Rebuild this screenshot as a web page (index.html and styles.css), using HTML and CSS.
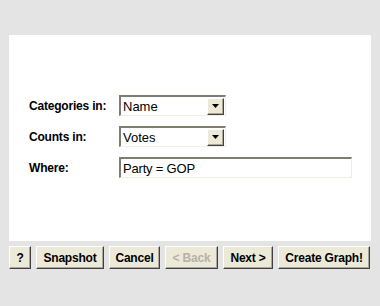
FILE: index.html
```html
<!DOCTYPE html>
<html>
<head>
<meta charset="utf-8">
<link rel="stylesheet" href="styles.css">
</head>
<body>
<div class="page">
  <div class="panel">
    <div class="form">
      <div class="row">
        <div class="label">Categories in:</div>
        <div class="select">
          <span class="value">Name</span>
          <span class="drop"><svg width="7" height="4" viewBox="0 0 7 4"><path d="M0 0H7L3.5 4Z" fill="#000"/></svg></span>
        </div>
      </div>
      <div class="row">
        <div class="label">Counts in:</div>
        <div class="select">
          <span class="value">Votes</span>
          <span class="drop"><svg width="7" height="4" viewBox="0 0 7 4"><path d="M0 0H7L3.5 4Z" fill="#000"/></svg></span>
        </div>
      </div>
      <div class="row">
        <div class="label">Where:</div>
        <div class="text">Party = GOP</div>
      </div>
    </div>
  </div>
  <div class="buttons">
    <div class="btn q">?</div>
    <div class="btn snap">Snapshot</div>
    <div class="btn cancel">Cancel</div>
    <div class="btn back disabled">&lt; Back</div>
    <div class="btn next">Next &gt;</div>
    <div class="btn create">Create Graph!</div>
  </div>
</div>
</body>
</html>
```

FILE: styles.css
```css
html, body {
  margin: 0;
  padding: 0;
  background: #e4e4e4;
  width: 380px;
  height: 306px;
  overflow: hidden;
  font-family: "Liberation Sans", Arial, sans-serif;
}
.page {
  padding: 35px 9px 0 9px;
}
.panel {
  background: #ffffff;
  height: 206px;
  box-sizing: border-box;
  padding: 60px 0 0 20px;
}
.form {
  display: flex;
  flex-direction: column;
  gap: 10px;
}
.row {
  display: flex;
  align-items: center;
  height: 21px;
}
.label {
  width: 90px;
  font-size: 12px;
  font-weight: bold;
  letter-spacing: -0.2px;
  color: #000;
}
.select, .text {
  box-sizing: border-box;
  height: 21px;
  border-style: solid;
  border-width: 2px 1px 1px 2px;
  border-color: #7f7d70 #f1efe2 #f1efe2 #7f7d70;
  background: #fff;
  display: flex;
  align-items: center;
  font-size: 13px;
  color: #000;
}
.select {
  width: 107px;
  justify-content: space-between;
}
.text {
  width: 233px;
  padding-left: 2px;
  letter-spacing: -0.2px;
}
.value {
  padding-left: 2px;
}
.drop {
  box-sizing: border-box;
  width: 17px;
  height: 17px;
  margin-right: 1px;
  background: #ece9d8;
  border-style: solid;
  border-width: 1px;
  border-color: #fff #404040 #404040 #fff;
  box-shadow: inset -1px -1px 0 #aca899;
  display: flex;
  align-items: center;
  justify-content: center;
}
.buttons {
  display: flex;
  gap: 5px;
  margin-top: 5px;
}
.btn {
  box-sizing: border-box;
  height: 23px;
  background: #ece9d8;
  border-style: solid;
  border-width: 1px;
  border-color: #fff #404040 #404040 #fff;
  box-shadow: inset -1px -1px 0 #aca899;
  font-size: 12px;
  font-weight: bold;
  letter-spacing: -0.2px;
  display: flex;
  align-items: center;
  justify-content: center;
  color: #000;
}
.q { width: 22px; }
.snap { width: 68px; }
.cancel { width: 51px; }
.back { width: 53px; }
.next { width: 50px; }
.create { width: 92px; }
.disabled { color: #b5b2a6; }
```
